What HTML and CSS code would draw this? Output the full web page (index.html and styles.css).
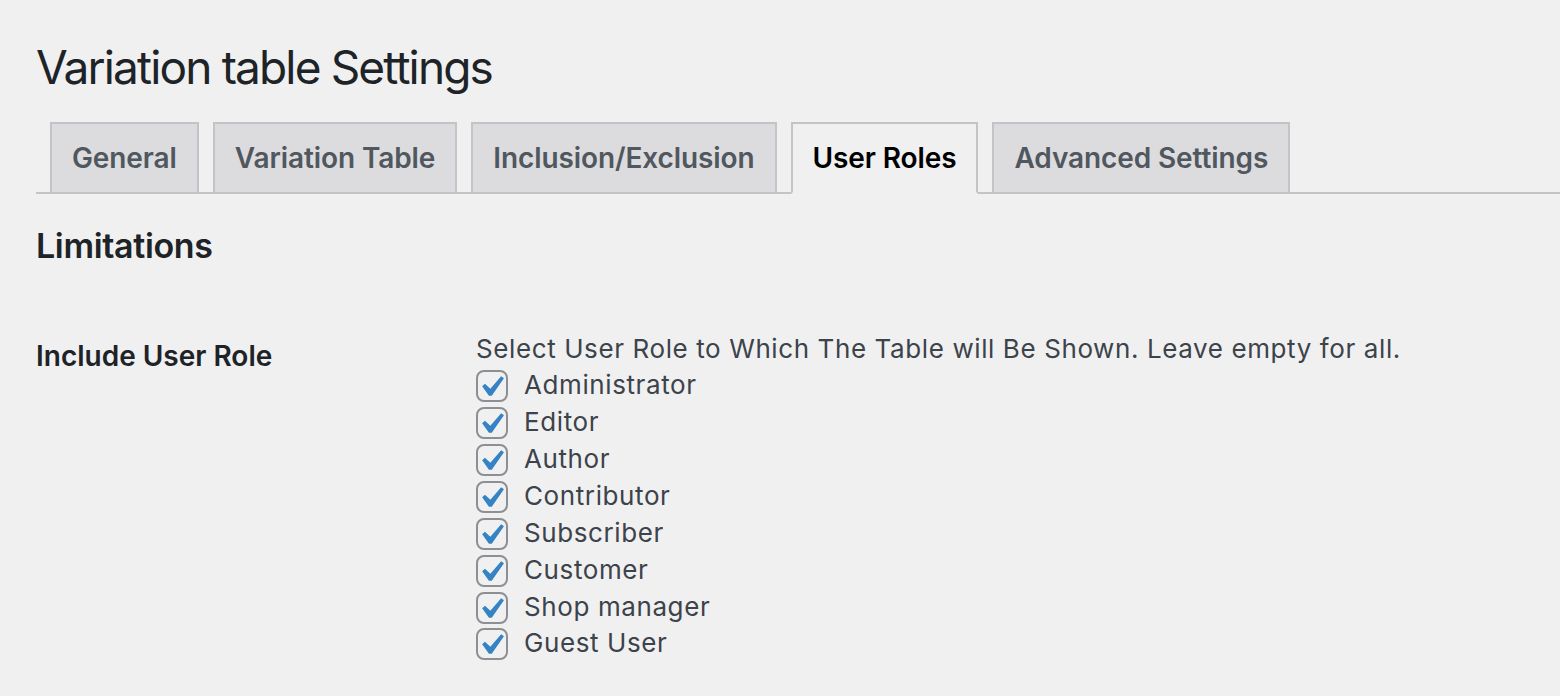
FILE: index.html
```html
<!DOCTYPE html>
<html lang="en">
<head>
<meta charset="utf-8">
<title>Variation table Settings</title>
<link rel="stylesheet" href="styles.css">
</head>
<body>
<div class="wrap">
  <h1 class="page-title">Variation table Settings</h1>
  <nav class="tab-bar">
    <a class="tab">General</a>
    <a class="tab">Variation Table</a>
    <a class="tab">Inclusion/Exclusion</a>
    <a class="tab tab-active">User Roles</a>
    <a class="tab">Advanced Settings</a>
  </nav>
  <h2 class="section-title">Limitations</h2>
  <div class="form-row">
    <div class="form-label">Include User Role</div>
    <div class="form-field">
      <div class="field-desc">Select User Role to Which The Table will Be Shown. Leave empty for all.</div>
      <div class="check-row"><span class="checkbox"><svg viewBox="0 0 20 20"><path d="M14.83 4.89l1.34.94-5.81 8.38H9.02L5.78 9.67l1.34-1.25 2.57 2.4z"/></svg></span><span class="check-label">Administrator</span></div>
      <div class="check-row"><span class="checkbox"><svg viewBox="0 0 20 20"><path d="M14.83 4.89l1.34.94-5.81 8.38H9.02L5.78 9.67l1.34-1.25 2.57 2.4z"/></svg></span><span class="check-label">Editor</span></div>
      <div class="check-row"><span class="checkbox"><svg viewBox="0 0 20 20"><path d="M14.83 4.89l1.34.94-5.81 8.38H9.02L5.78 9.67l1.34-1.25 2.57 2.4z"/></svg></span><span class="check-label">Author</span></div>
      <div class="check-row"><span class="checkbox"><svg viewBox="0 0 20 20"><path d="M14.83 4.89l1.34.94-5.81 8.38H9.02L5.78 9.67l1.34-1.25 2.57 2.4z"/></svg></span><span class="check-label">Contributor</span></div>
      <div class="check-row"><span class="checkbox"><svg viewBox="0 0 20 20"><path d="M14.83 4.89l1.34.94-5.81 8.38H9.02L5.78 9.67l1.34-1.25 2.57 2.4z"/></svg></span><span class="check-label">Subscriber</span></div>
      <div class="check-row"><span class="checkbox"><svg viewBox="0 0 20 20"><path d="M14.83 4.89l1.34.94-5.81 8.38H9.02L5.78 9.67l1.34-1.25 2.57 2.4z"/></svg></span><span class="check-label">Customer</span></div>
      <div class="check-row"><span class="checkbox"><svg viewBox="0 0 20 20"><path d="M14.83 4.89l1.34.94-5.81 8.38H9.02L5.78 9.67l1.34-1.25 2.57 2.4z"/></svg></span><span class="check-label">Shop manager</span></div>
      <div class="check-row"><span class="checkbox"><svg viewBox="0 0 20 20"><path d="M14.83 4.89l1.34.94-5.81 8.38H9.02L5.78 9.67l1.34-1.25 2.57 2.4z"/></svg></span><span class="check-label">Guest User</span></div>
    </div>
  </div>
</div>
</body>
</html>
```

FILE: styles.css
```css
html, body {
  margin: 0;
  padding: 0;
  background: #f0f0f1;
}
body {
  font-family: Inter, "Noto Sans", Roboto, sans-serif;
  color: #3c434a;
  height: 696px;
  overflow: hidden;
}
.wrap {
  padding-left: 36px;
}
.page-title {
  margin: 0;
  padding-top: 37px;
  font-size: 46px;
  font-weight: 400;
  line-height: 60px;
  letter-spacing: -1.85px;
  color: #1d2327;
}
.tab-bar {
  display: flex;
  margin-top: 25px;
  border-bottom: 2px solid #c3c4c7;
}
.tab {
  display: block;
  margin-left: 14px;
  margin-bottom: -2px;
  padding: 10px 20px;
  border: 2px solid #c3c4c7;
  background: #dcdcde;
  color: #50575e;
  font-size: 28px;
  font-weight: 600;
  line-height: 48px;
  letter-spacing: -0.1px;
  white-space: nowrap;
}
.tab-active {
  background: #f0f0f1;
  border-bottom-color: #f0f0f1;
  color: #000;
}
.section-title {
  margin: 28px 0 0;
  font-size: 34px;
  font-weight: 600;
  line-height: 48px;
  letter-spacing: -0.35px;
  color: #1d2327;
}
.form-row {
  display: flex;
  margin-top: 29.5px;
}
.form-label {
  width: 420px;
  flex: none;
  box-sizing: border-box;
  padding-top: 38.7px;
  font-size: 28px;
  font-weight: 600;
  line-height: 36px;
  color: #1d2327;
}
.form-field {
  padding: 31px 20px 30px;
  font-size: 26px;
  line-height: 36.86px;
  letter-spacing: 0.6px;
}
.field-desc {
  white-space: nowrap;
}
.check-row {
  display: flex;
  align-items: flex-start;
  height: 36.86px;
}
.checkbox {
  display: block;
  flex: none;
  width: 28px;
  height: 28px;
  margin-top: 3px;
  margin-right: 16px;
  border: 2px solid #8c8f94;
  border-radius: 8px;
  background: #f0f0f1;
}
.checkbox svg {
  display: block;
  width: 42px;
  height: 42px;
  margin: -6px 0 0 -8px;
  fill: #3582c4;
}
.check-label {
  white-space: nowrap;
}
```
